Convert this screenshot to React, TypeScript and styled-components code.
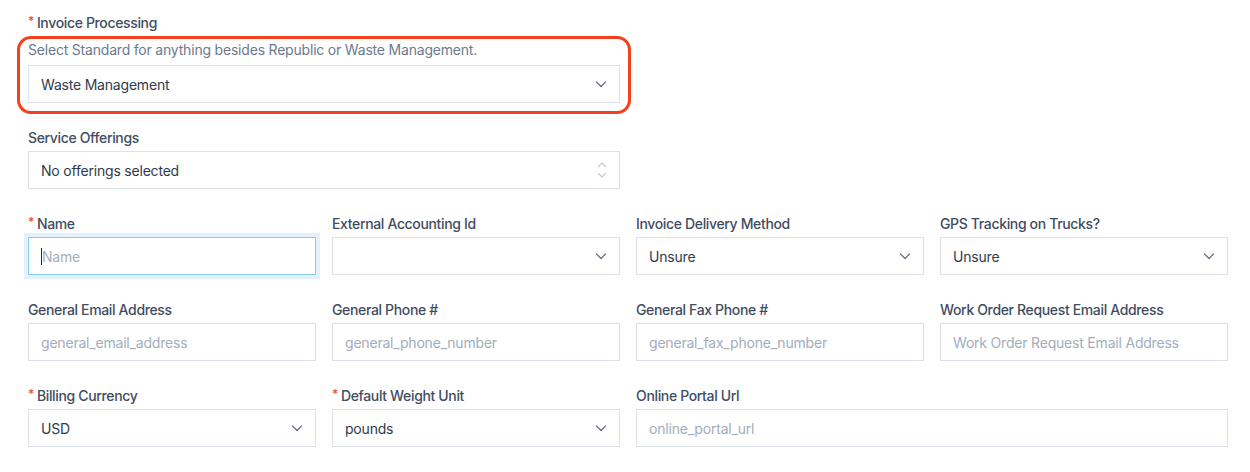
import React from 'react';
import styled, { createGlobalStyle } from 'styled-components';

const GlobalStyle = createGlobalStyle`
  html, body {
    margin: 0;
    padding: 0;
    background: #ffffff;
  }
  body {
    font-family: Inter, 'Noto Sans', sans-serif;
    -webkit-font-smoothing: antialiased;
  }
  * {
    box-sizing: border-box;
  }
`;

const Page = styled.div`
  width: 1250px;
  padding: 12px 22px 0 28px;
  display: flex;
  flex-direction: column;
  gap: 24px;
`;

// the red annotation ring does not push the content below it
const Highlight = styled.div`
  margin: 0 -11px -11px -11px;
  padding: 1px 8px 8px 8px;
  border: 3px solid #f4401c;
  border-radius: 14px;
`;

const TopField = styled.div`
  width: 592px;
  display: flex;
  flex-direction: column;
`;

const Grid = styled.div`
  display: grid;
  grid-template-columns: repeat(4, 288px);
  column-gap: 16px;
  row-gap: 24px;
`;

const Field = styled.div<{ $span?: number }>`
  display: flex;
  flex-direction: column;
  grid-column: span ${(p) => p.$span || 1};
`;

const Label = styled.label`
  display: flex;
  align-items: center;
  height: 20px;
  margin-bottom: 4px;
  font-size: 14px;
  font-weight: 500;
  color: #3f4d61;
  letter-spacing: -0.35px;
`;

const Required = styled.span`
  color: #ef4444;
  font-size: 12px;
  margin-right: 3px;
  align-self: flex-start;
  margin-top: 1px;
`;

const Help = styled.div`
  height: 20px;
  line-height: 20px;
  margin-bottom: 5px;
  font-size: 14px;
  color: #6b7a8e;
  letter-spacing: -0.2px;
`;

const Box = styled.div<{ $focused?: boolean }>`
  height: 38px;
  display: flex;
  align-items: center;
  padding: 0 12px;
  border: 1px solid ${(p) => (p.$focused ? '#8ccbf2' : '#dde2ea')};
  box-shadow: ${(p) => (p.$focused ? '0 0 0 4px #e2f1fc' : 'none')};
  background: #ffffff;
  font-size: 14px;
  color: #2f3b4c;
  letter-spacing: -0.2px;
`;

const Value = styled.span`
  flex: 1;
`;

const Placeholder = styled.span`
  flex: 1;
  color: #a3adbb;
`;

const Caret = styled.span`
  display: inline-block;
  width: 1px;
  height: 17px;
  background: #1f2937;
`;

const Chevron = () => (
  <svg width="12" height="12" viewBox="0 0 12 12" fill="none">
    <path d="M1.5 4l4.5 4.5L10.5 4" stroke="#6b7484" strokeWidth="1.3" strokeLinecap="round" strokeLinejoin="round" />
  </svg>
);

const UpDown = () => (
  <svg width="10" height="20" viewBox="0 0 10 20" fill="none">
    <path d="M1.5 6.5L5 3l3.5 3.5M1.5 13.5L5 17l3.5-3.5" stroke="#c3cad4" strokeWidth="1.3" strokeLinecap="round" strokeLinejoin="round" />
  </svg>
);

const Select = ({ value }: { value?: string }) => (
  <Box>
    <Value>{value}</Value>
    <Chevron />
  </Box>
);

const Input = ({ placeholder }: { placeholder: string }) => (
  <Box>
    <Placeholder>{placeholder}</Placeholder>
  </Box>
);

const App: React.FC = () => {
  return (
    <>
      <GlobalStyle />
      <Page>
        <TopField>
          <Label>
            <Required>*</Required>Invoice Processing
          </Label>
          <Highlight>
            <Help>Select Standard for anything besides Republic or Waste Management.</Help>
            <Select value="Waste Management" />
          </Highlight>
        </TopField>

        <TopField>
          <Label>Service Offerings</Label>
          <Box>
            <Value>No offerings selected</Value>
            <UpDown />
          </Box>
        </TopField>

        <Grid>
          <Field>
            <Label>
              <Required>*</Required>Name
            </Label>
            <Box $focused>
              <Caret />
              <Placeholder>Name</Placeholder>
            </Box>
          </Field>
          <Field>
            <Label>External Accounting Id</Label>
            <Select />
          </Field>
          <Field>
            <Label>Invoice Delivery Method</Label>
            <Select value="Unsure" />
          </Field>
          <Field>
            <Label>GPS Tracking on Trucks?</Label>
            <Select value="Unsure" />
          </Field>

          <Field>
            <Label>General Email Address</Label>
            <Input placeholder="general_email_address" />
          </Field>
          <Field>
            <Label>General Phone #</Label>
            <Input placeholder="general_phone_number" />
          </Field>
          <Field>
            <Label>General Fax Phone #</Label>
            <Input placeholder="general_fax_phone_number" />
          </Field>
          <Field>
            <Label>Work Order Request Email Address</Label>
            <Input placeholder="Work Order Request Email Address" />
          </Field>

          <Field>
            <Label>
              <Required>*</Required>Billing Currency
            </Label>
            <Select value="USD" />
          </Field>
          <Field>
            <Label>
              <Required>*</Required>Default Weight Unit
            </Label>
            <Select value="pounds" />
          </Field>
          <Field $span={2}>
            <Label>Online Portal Url</Label>
            <Input placeholder="online_portal_url" />
          </Field>
        </Grid>
      </Page>
    </>
  );
};

export default App;
